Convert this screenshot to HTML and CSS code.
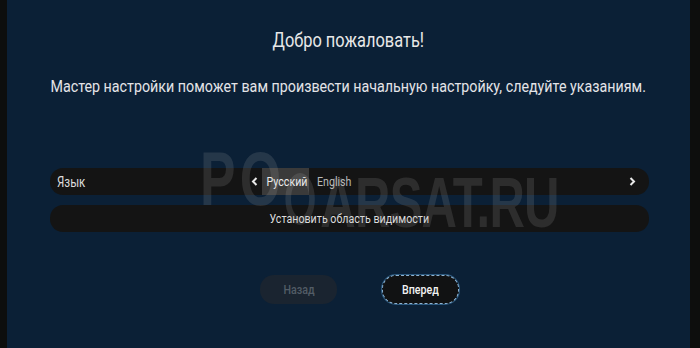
FILE: index.html
```html
<!DOCTYPE html>
<html lang="ru">
<head>
<meta charset="utf-8">
<link rel="stylesheet" href="styles.css">
</head>
<body>
<div class="screen">
  <h1 class="title"><span class="cx">Добро пожаловать!</span></h1>
  <p class="subtitle"><span class="cx">Мастер настройки поможет вам произвести начальную настройку, следуйте указаниям.</span></p>
  <div class="rows">
    <div class="row lang-row">
      <span class="label"><span class="lx">Язык</span></span>
      <span class="chev">
        <svg width="7" height="9" viewBox="0 0 7 9"><path d="M5.5 1 L2 4.5 L5.5 8" fill="none" stroke="#e8e8e8" stroke-width="2"/></svg>
      </span>
      <span class="opt active"><span class="cx">Русский</span></span>
      <span class="opt other"><span class="lx">English</span></span>
      <span class="spacer"></span>
      <span class="chev right">
        <svg width="7" height="9" viewBox="0 0 7 9"><path d="M1.5 1 L5 4.5 L1.5 8" fill="none" stroke="#e8e8e8" stroke-width="2"/></svg>
      </span>
    </div>
    <div class="row center-row"><span class="cx">Установить область видимости</span></div>
  </div>
  <div class="buttons">
    <button class="btn disabled"><span class="cx">Назад</span></button>
    <button class="btn focused"><span class="cx">Вперед</span></button>
  </div>
  <div class="watermark">
    <span class="wm-a">PO</span><span class="wm-logo"></span><span class="wm-b">ARSAT.RU</span>
  </div>
</div>
</body>
</html>
```
FILE: styles.css
```css
html, body {
  margin: 0;
  padding: 0;
}
body {
  background: #0d0e0d;
  width: 700px;
  height: 348px;
  overflow: hidden;
  font-family: Roboto, "Liberation Sans", sans-serif;
}
.cx, .lx {
  display: inline-block;
  white-space: nowrap;
  transform: scaleX(0.82);
}
.cx { transform-origin: center; }
.lx { transform-origin: left center; }
.screen {
  position: relative;
  margin-left: 7px;
  width: 683px;
  height: 348px;
  background: #0b2036;
  display: flex;
  flex-direction: column;
  align-items: center;
  color: #e6e6e6;
}
.title {
  margin: 28px 0 0;
  font-size: 20px;
  line-height: 24px;
  font-weight: normal;
  color: #e8e8e8;
  white-space: nowrap;
}
.subtitle {
  margin: 25px 0 0;
  font-size: 16.5px;
  line-height: 20px;
  color: #e4e4e8;
  white-space: nowrap;
}
.subtitle .cx {
  transform: scaleX(0.865);
}
.rows {
  margin-top: 71px;
  width: 599px;
  display: flex;
  flex-direction: column;
  gap: 10px;
  padding-left: 2px;
}
.row {
  height: 27px;
  border-radius: 13px;
  background: #141414;
  font-size: 13px;
  color: #dcdcdc;
  display: flex;
  align-items: center;
}
.lang-row .label {
  width: 201px;
  padding-left: 7px;
  box-sizing: border-box;
  font-size: 14px;
}
.chev {
  display: flex;
  align-items: center;
  width: 11px;
}
.chev.right {
  width: auto;
  margin-right: 13px;
}
.opt {
  height: 27px;
  line-height: 27px;
  color: #b9b9b9;
}
.opt.active {
  width: 47px;
  text-align: center;
  background: #3a3a3a;
  color: #ececec;
}
.opt.other {
  margin-left: 8px;
}
.spacer {
  flex: 1;
}
.center-row {
  justify-content: center;
}
.buttons {
  margin-top: 43px;
  display: flex;
  gap: 45px;
  padding-left: 22px;
}
.btn {
  width: 77px;
  height: 29px;
  border-radius: 14px;
  font-family: inherit;
  font-size: 13px;
  font-weight: 500;
  border: none;
  padding: 0;
}
.btn.disabled {
  background: #1a2430;
  color: #525c66;
}
.btn.focused {
  background: #111213;
  color: #f2f2f2;
  border: 1px dashed #8fb2d0;
  box-shadow: 0 0 0 1px #2c5a80;
}
.watermark {
  position: absolute;
  left: 193px;
  top: 141px;
  display: flex;
  align-items: flex-start;
  font-family: "Liberation Sans", sans-serif;
  font-weight: bold;
  font-size: 76px;
  line-height: 76px;
  color: rgba(190, 190, 190, 0.15);
  transform: scaleX(0.7);
  transform-origin: left top;
  pointer-events: none;
}
.wm-a {
  letter-spacing: 6px;
}
.wm-b {
  margin-top: 27px;
  font-size: 70px;
  line-height: 70px;
  letter-spacing: -1px;
}
.wm-logo {
  width: 26px;
  height: 36px;
  margin: 32px 8px 0 0;
  border: 8px solid rgba(190, 190, 190, 0.15);
  border-radius: 50%;
}
```
